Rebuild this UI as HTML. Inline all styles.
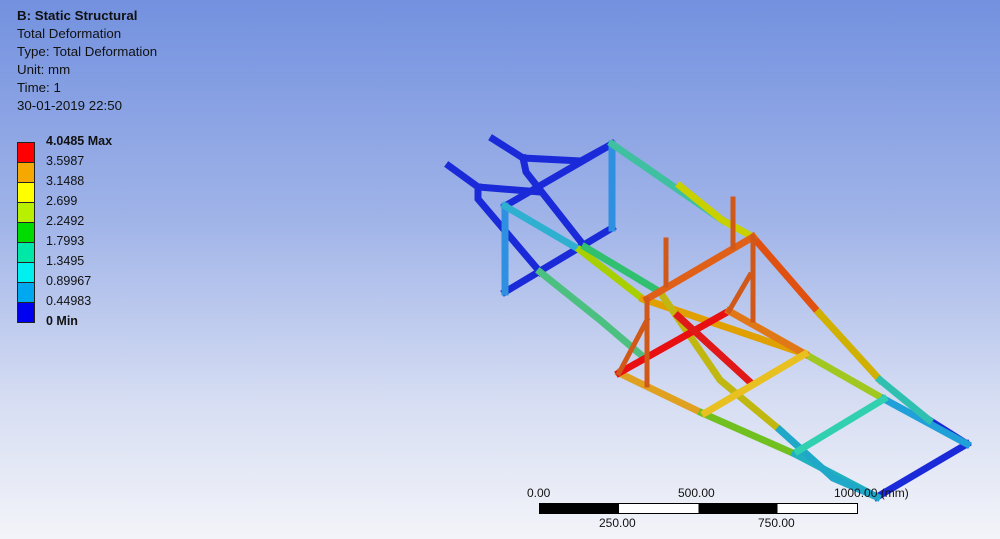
<!DOCTYPE html>
<html><head><style>
body{margin:0;width:1000px;height:539px;overflow:hidden;background:linear-gradient(#7391df 0%,#9fb3e8 40%,#d7def3 75%,#f3f4f9 100%);font-family:"Liberation Sans",sans-serif;position:relative}
.t{position:absolute;left:17px;font-size:13.3px;color:#111;line-height:18px}
.lg{position:absolute;left:17px;top:142px;width:16px;border:1px solid #222}
.lg div{height:19px;border-bottom:1px solid #222}
.lg div:last-child{border-bottom:none}
.lv{position:absolute;left:46px;font-size:12.5px;color:#111}
.s{position:absolute;font-size:12px;color:#111}
</style></head><body>
<div class="t" style="top:7px"><b>B: Static Structural</b><br>Total Deformation<br>Type: Total Deformation<br>Unit: mm<br>Time: 1<br>30-01-2019 22:50</div>
<div class="lg"><div style="background:#f00"></div><div style="background:#f5a800"></div><div style="background:#ff0"></div><div style="background:#b8f000"></div><div style="background:#00dc00"></div><div style="background:#00e8a8"></div><div style="background:#00f0f0"></div><div style="background:#00a8f0"></div><div style="background:#0000f0"></div></div>
<div class="lv" style="top:134px"><b>4.0485 Max</b></div>
<div class="lv" style="top:154px">3.5987</div>
<div class="lv" style="top:174px">3.1488</div>
<div class="lv" style="top:194px">2.699</div>
<div class="lv" style="top:214px">2.2492</div>
<div class="lv" style="top:234px">1.7993</div>
<div class="lv" style="top:254px">1.3495</div>
<div class="lv" style="top:274px">0.89967</div>
<div class="lv" style="top:294px">0.44983</div>
<div class="lv" style="top:314px"><b>0 Min</b></div>
<svg width="1000" height="539" style="position:absolute;left:0;top:0" fill="none" stroke-linecap="square" stroke-width="7">
<g stroke="#1a2ad8">
<path d="M493 139 L523 158 L581 161 L612 144"/>
<path d="M449 166 L478 187 L540 192"/>
<path d="M478 187 L478 199 L540 272"/>
<path d="M523 158 L526 172 L585 247"/>
<path d="M505 206 L612 144"/>
<path d="M505 292 L612 228"/>
<path d="M967 444 L877 497"/>
<path d="M929 420 L967 444"/>
</g>
<g stroke="#2f8fe0"><path d="M505 206 L505 292"/><path d="M612 144 L612 228"/></g>
<path d="M612 144 L722 220" stroke="#3fc0a0"/>
<path d="M680 186 L722 220 L753 237" stroke="#c8d000"/>
<path d="M505 206 L580 250" stroke="#2fb0d0"/>
<path d="M580 250 L643 299" stroke="#a8d000"/>
<path d="M540 272 L600 320 L640 354" stroke="#4cc080"/>
<path d="M585 247 L660 292" stroke="#30c070"/>
<path d="M643 299 L805 354" stroke="#e0a000"/>
<path d="M805 354 L884 399" stroke="#a0c820"/>
<path d="M884 399 L967 444" stroke="#20a0d8"/>
<path d="M753 237 L819 313" stroke="#e05010"/>
<path d="M819 313 L880 380" stroke="#d0b000"/>
<path d="M880 380 L929 420" stroke="#30c0b0"/>
<path d="M619 373 L702 413" stroke="#e0a020"/>
<path d="M702 413 L795 454" stroke="#70c020"/>
<path d="M795 454 L877 497" stroke="#20b0c0"/>
<path d="M660 292 L720 380 L780 430" stroke="#c0b810"/>
<path d="M780 430 L833 478 L877 497" stroke="#20a8c8"/>
<path d="M619 373 L729 311" stroke="#e81010"/>
<path d="M647 299 L753 237" stroke="#e06018"/>
<path d="M678 316 L750 382" stroke="#e01818"/>
<path d="M729 311 L805 354" stroke="#e07818"/>
<path d="M805 354 L705 413" stroke="#e8c020"/>
<path d="M884 399 L798 451" stroke="#30d0b0"/>
<g stroke="#d05818" stroke-width="5"><path d="M647 299 L647 385"/><path d="M753 237 L753 320"/><path d="M666 240 L666 285"/><path d="M733 199 L733 247"/><path d="M619 373 L647 320"/><path d="M729 311 L750 275"/></g>
</svg>
<div style="position:absolute;left:539px;top:503px;width:317px;height:9px;border:1px solid #000;background:linear-gradient(90deg,#000 25%,#fff 25%,#fff 50%,#000 50%,#000 75%,#fff 75%)"></div>
<div class="s" style="left:527px;top:486px">0.00</div>
<div class="s" style="left:678px;top:486px">500.00</div>
<div class="s" style="left:834px;top:486px">1000.00 (mm)</div>
<div class="s" style="left:599px;top:516px">250.00</div>
<div class="s" style="left:758px;top:516px">750.00</div>
</body></html>
